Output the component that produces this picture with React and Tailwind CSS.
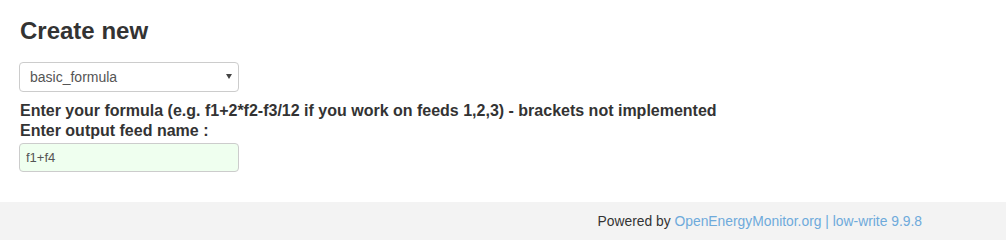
import { useState } from 'react'

const App = () => {
  const [formula, setFormula] = useState('basic_formula')
  const [outputName, setOutputName] = useState('f1+f4')

  return (
    <div className="min-h-[240px] flex flex-col bg-white text-[#333] font-['Liberation_Sans',Arial,sans-serif]">
      {/* Main */}
      <div className="pl-[19px] pt-[18px] pb-[30px]">
        <h2 className="pl-px text-[24px] leading-[26px] font-bold text-[#333]">Create new</h2>

        <div className="relative mt-[18px] w-[220px]">
          <select
            value={formula}
            onChange={(e) => setFormula(e.target.value)}
            className="appearance-none w-full h-[30px] pl-[10px] pr-6 text-[14px] text-[#555] bg-white border border-[#ccc] rounded-[4px] outline-none"
          >
            <option value="basic_formula">basic_formula</option>
          </select>
          <svg
            className="absolute left-[207px] top-[12px] pointer-events-none"
            width="6"
            height="5"
            viewBox="0 0 6 5"
          >
            <path d="M0 0 L6 0 L3 5 Z" fill="#444" />
          </svg>
        </div>

        <div className="mt-[9px] pl-px text-[16px] leading-[20px] font-bold">
          <p>Enter your formula (e.g. f1+2*f2-f3/12 if you work on feeds 1,2,3) - brackets not implemented</p>
          <p>Enter output feed name :</p>
        </div>

        <input
          type="text"
          value={outputName}
          onChange={(e) => setOutputName(e.target.value)}
          className="mt-[2px] block w-[220px] h-[29px] pl-[6px] text-[13px] text-[#555] bg-[#efffef] border border-[#ccc] rounded-[4px] outline-none"
        />
      </div>

      {/* Footer */}
      <div className="h-[38px] flex items-center justify-end pr-[84px] bg-[#f3f3f3] text-[13.85px]">
        <span className="text-[#333]">Powered by&nbsp;</span>
        <a href="#" className="text-[#6eaadb]">OpenEnergyMonitor.org</a>
        <span className="text-[#6eaadb]">&nbsp;|&nbsp;</span>
        <a href="#" className="text-[#6eaadb]">low-write 9.9.8</a>
      </div>
    </div>
  )
}

export default App
